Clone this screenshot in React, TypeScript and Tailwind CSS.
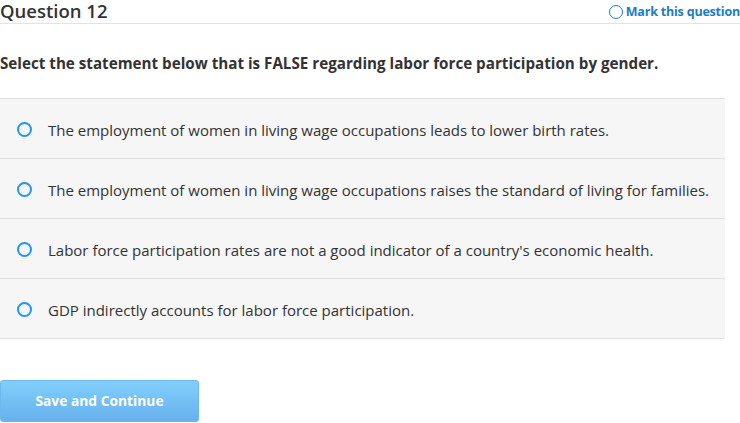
import React from "react";

const options = [
  "The employment of women in living wage occupations leads to lower birth rates.",
  "The employment of women in living wage occupations raises the standard of living for families.",
  "Labor force participation rates are not a good indicator of a country's economic health.",
  "GDP indirectly accounts for labor force participation.",
];

export default function App() {
  return (
    <div className="w-[740px] h-[423px] bg-white overflow-hidden text-[#333333]" style={{ fontFamily: "'Open Sans', Lato, sans-serif" }}>
      <div className="flex items-start justify-between h-[24px] border-b border-[#e3e3e3]">
        <h1 className="text-[18.5px] font-semibold leading-[22px]">Question 12</h1>
        <button className="flex items-center gap-[3px] mt-[5px] h-[14px] text-[12.5px] leading-[14px] font-bold text-[#1b7cc4] tracking-[-0.2px]">
          <span className="w-[14px] h-[14px] rounded-full border-[1.5px] border-[#1b7cc4]" />
          Mark this question
        </button>
      </div>
      <p className="mt-[29px] text-[15.2px] font-bold leading-[20px]">
        Select the statement below that is FALSE regarding labor force participation by gender.
      </p>
      <div className="mt-[25px] w-[725px] border-t border-[#e0e0e0]">
        {options.map((o) => (
          <div key={o} className="flex items-center h-[60px] pt-[2px] bg-[#f6f6f6] border-b border-[#e0e0e0]">
            <span className="ml-[17px] w-[15px] h-[15px] rounded-full border-[2.5px] border-[#2196f3] shrink-0" />
            <span className="ml-[16px] text-[15px] leading-[20px]">{o}</span>
          </div>
        ))}
      </div>
      <button className="mt-[41px] w-[199px] h-[42px] rounded-[3px] border border-[#6db8ee] bg-gradient-to-b from-[#82cffd] to-[#66b1ec] text-white text-[13.8px] font-bold">
        Save and Continue
      </button>
    </div>
  );
}
